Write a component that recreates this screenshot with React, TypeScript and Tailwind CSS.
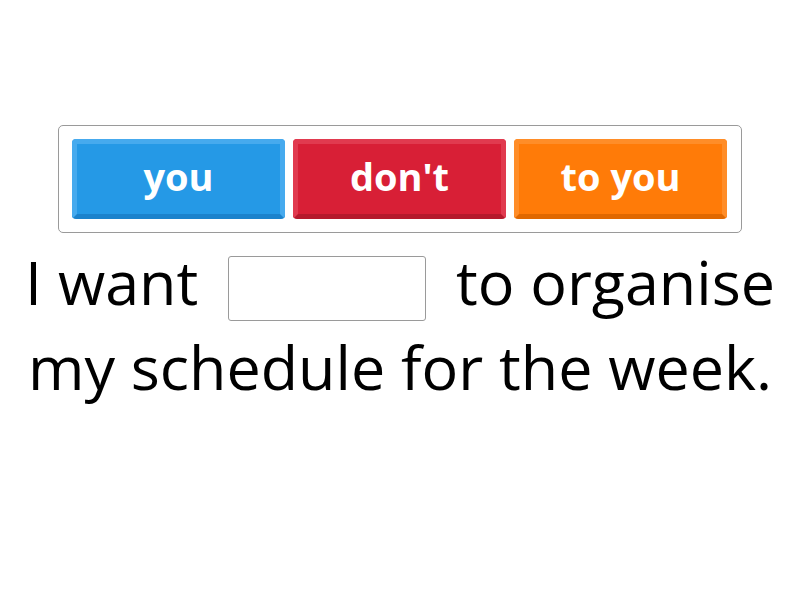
export default function App() {
  const tiles = [
    { label: 'you', cls: 'bg-[#2599e6] border-[#46aaee] border-b-[#1b82cc]' },
    { label: "don't", cls: 'bg-[#d81f36] border-[#e13a4f] border-b-[#b5192c]' },
    { label: 'to you', cls: 'bg-[#ff7b08] border-[#ff8d28] border-b-[#e06800]' },
  ];

  return (
    <div className="w-[800px] h-[600px] bg-white font-['Open_Sans',sans-serif]">
      <div className="pt-[125px] px-[58px]">
        {/* word bank */}
        <div className="flex gap-2 p-[13px] border border-[#9a9a9a] rounded-[5px]">
          {tiles.map((t) => (
            <div
              key={t.label}
              className={`w-[213px] h-[80px] flex items-center justify-center rounded-[4px] border-[5px] text-white font-bold text-[38px] leading-none pb-[6px] ${t.cls}`}
            >
              {t.label}
            </div>
          ))}
        </div>
      </div>

      {/* sentence */}
      <div className="mt-[6px] text-center text-black text-[61px] leading-[85px] whitespace-nowrap">
        <p>
          I want{' '}
          <span className="inline-block align-middle w-[198px] h-[65px] mx-[14px] border border-[#9a9a9a] rounded-[3px]"></span>{' '}
          to organise
        </p>
        <p>my schedule for the week.</p>
      </div>
    </div>
  );
}
